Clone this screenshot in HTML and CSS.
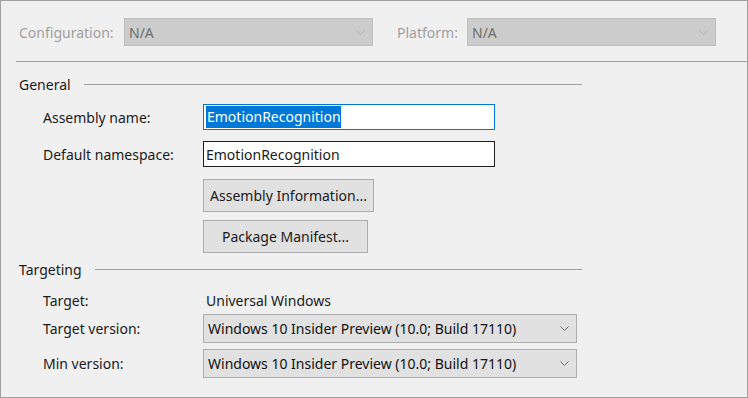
FILE: index.html
```html
<!DOCTYPE html>
<html lang="en">
<head>
  <meta charset="UTF-8">
  <title>Application</title>
  <link rel="stylesheet" href="styles.css">
</head>
<body>
<div class="window">
  <div class="topbar">
    <span class="top-label config-label">Configuration:</span>
    <div class="combo disabled config-combo"><span>N/A</span><svg class="chev" width="9" height="5" viewBox="0 0 9 5"><path d="M0.5 0.5 L4.5 4.5 L8.5 0.5" fill="none" stroke="currentColor"/></svg></div>
    <span class="top-label platform-label">Platform:</span>
    <div class="combo disabled platform-combo"><span>N/A</span><svg class="chev" width="9" height="5" viewBox="0 0 9 5"><path d="M0.5 0.5 L4.5 4.5 L8.5 0.5" fill="none" stroke="currentColor"/></svg></div>
  </div>
  <div class="top-rule"></div>

  <div class="section general">
    <div class="section-head"><span>General</span><div class="rule"></div></div>
    <div class="row row-input">
      <span class="label">Assembly name:</span>
      <div class="textbox focused"><span class="sel">EmotionRecognition</span></div>
    </div>
    <div class="row row-input second">
      <span class="label">Default namespace:</span>
      <div class="textbox"><span>EmotionRecognition</span></div>
    </div>
    <div class="row btn-row first-btn"><button class="btn wide">Assembly Information...</button></div>
    <div class="row btn-row"><button class="btn narrow">Package Manifest...</button></div>
  </div>

  <div class="section targeting">
    <div class="section-head"><span>Targeting</span><div class="rule"></div></div>
    <div class="row row-text">
      <span class="label">Target:</span>
      <span class="value">Universal Windows</span>
    </div>
    <div class="row row-combo">
      <span class="label">Target version:</span>
      <div class="combo version"><span>Windows 10 Insider Preview (10.0; Build 17110)</span><svg class="chev" width="9" height="5" viewBox="0 0 9 5"><path d="M0.5 0.5 L4.5 4.5 L8.5 0.5" fill="none" stroke="currentColor"/></svg></div>
    </div>
    <div class="row row-combo second">
      <span class="label">Min version:</span>
      <div class="combo version"><span>Windows 10 Insider Preview (10.0; Build 17110)</span><svg class="chev" width="9" height="5" viewBox="0 0 9 5"><path d="M0.5 0.5 L4.5 4.5 L8.5 0.5" fill="none" stroke="currentColor"/></svg></div>
    </div>
  </div>
</div>
</body>
</html>
```

FILE: styles.css
```css
html, body {
  margin: 0;
  padding: 0;
}

body {
  background: #f0f0f0;
  font-family: "Noto Sans", "Open Sans", sans-serif;
  font-size: 14px;
  color: #1a1a1a;
}

.window {
  width: 748px;
  height: 398px;
  box-sizing: border-box;
  border: 1px solid #a0a0a0;
  background: #f0f0f0;
  overflow: hidden;
}

/* top configuration bar */
.topbar {
  display: flex;
  align-items: center;
  height: 28px;
  margin-top: 17px;
}

.top-label {
  color: #a0a0a0;
}
.config-label {
  margin-left: 18px;
  width: 105px;
}
.platform-label {
  margin-left: 24px;
  width: 70px;
}

.combo {
  display: flex;
  align-items: center;
  justify-content: space-between;
  box-sizing: border-box;
  height: 28px;
  padding: 0 7px 0 4px;
  border: 1px solid #adadad;
  background: #e1e1e1;
  color: #111;
}
.combo .chev {
  color: #6a6a6a;
}

.combo.disabled {
  background: #cccccc;
  border-color: #bfbfbf;
  color: #6d6d6d;
}
.combo.disabled .chev {
  color: #b0b0b0;
}
.config-combo {
  width: 249px;
}
.platform-combo {
  width: 249px;
}

.top-rule {
  height: 1px;
  background: #a0a0a0;
  margin: 15px 0 0 15px;
}

/* sections */
.section-head {
  display: flex;
  align-items: center;
  height: 20px;
  padding-left: 18px;
  width: 563px;
}
.section-head .rule {
  flex: 1;
  height: 1px;
  background: #a0a0a0;
  margin-left: 13px;
}

.general .section-head {
  margin-top: 12px;
}

.row {
  display: flex;
  align-items: center;
  padding-left: 42px;
}
.label {
  width: 160px;
}

.row-input {
  margin-top: 10px;
  height: 26px;
}
.row-input.second {
  margin-top: 11px;
}

.textbox {
  box-sizing: border-box;
  width: 292px;
  height: 26px;
  border: 1px solid #1e1e1e;
  background: #fff;
  padding: 1px 2px;
  display: flex;
  align-items: center;
}
.textbox.focused {
  border-color: #0078d7;
}
.textbox .sel {
  background: #0078d7;
  color: #fff;
  line-height: 22px;
  padding-left: 1px;
}

.btn-row {
  padding-left: 202px;
  margin-top: 8px;
}
.btn-row.first-btn {
  margin-top: 12px;
}

.btn {
  box-sizing: border-box;
  height: 33px;
  border: 1px solid #adadad;
  background: #e1e1e1;
  font-family: inherit;
  font-size: 14px;
  color: #1a1a1a;
  padding: 0;
}
.btn.wide {
  width: 171px;
}
.btn.narrow {
  width: 165px;
}

.targeting .section-head {
  margin-top: 6px;
}

.row-text {
  margin-top: 10px;
  height: 22px;
}
.row-text .value {
  margin-left: 3px;
}

.row-combo {
  margin-top: 3px;
  height: 29px;
}
.row-combo.second {
  margin-top: 6px;
}
.combo.version {
  width: 374px;
  height: 29px;
}
```
